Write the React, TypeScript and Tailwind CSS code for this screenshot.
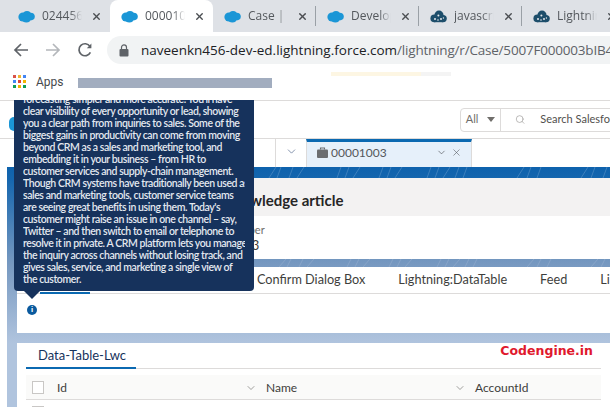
import { ChevronDown, Search, X } from "lucide-react";

type Tab = { title: string; icon: "sf" | "dark"; active?: boolean; sep?: boolean };

const tabs: Tab[] = [
  { title: "024456", icon: "sf" },
  { title: "000010", icon: "sf", active: true },
  { title: "Case | Salesforce", icon: "sf", sep: true },
  { title: "Developer", icon: "sf", sep: true },
  { title: "javascript", icon: "dark", sep: true },
  { title: "Lightning", icon: "dark" },
];

const appColors = ["#d9534a", "#f1b62f", "#4285f4", "#4285f4", "#db4437", "#f4b400", "#0f9d58", "#f4b400", "#0f9d58"];

const helpLines = [
  "clear visibility of every opportunity or lead, showing",
  "you a clear path from inquiries to sales. Some of the",
  "biggest gains in productivity can come from moving",
  "beyond CRM as a sales and marketing tool, and",
  "embedding it in your business – from HR to",
  "customer services and supply-chain management.",
  "Though CRM systems have traditionally been used as",
  "sales and marketing tools, customer service teams",
  "are seeing great benefits in using them. Today's",
  "customer might raise an issue in one channel – say,",
  "Twitter – and then switch to email or telephone to",
  "resolve it in private. A CRM platform lets you manage",
  "the inquiry across channels without losing track, and",
  "gives sales, service, and marketing a single view of",
  "the customer.",
];

function SfCloud() {
  return (
    <svg width="17" height="13" viewBox="0 0 17 13" className="shrink-0">
      <g fill="#1b96d6">
        <ellipse cx="5" cy="7" rx="4.6" ry="4.6" />
        <ellipse cx="9" cy="4.6" rx="4" ry="3.6" />
        <ellipse cx="12.6" cy="6.6" rx="4.2" ry="3.8" />
        <ellipse cx="8.4" cy="9" rx="4" ry="3.6" />
      </g>
    </svg>
  );
}

function DarkCloud() {
  return (
    <svg width="17" height="13" viewBox="0 0 17 13" className="shrink-0">
      <g fill="#1d4e6b">
        <ellipse cx="4.4" cy="8.4" rx="4" ry="3.8" />
        <ellipse cx="9" cy="5.4" rx="4.6" ry="4.8" />
        <ellipse cx="13" cy="8.6" rx="3.8" ry="3.6" />
        <rect x="4" y="8" width="9" height="4.2" />
      </g>
      <g fill="#e4e7ea">
        <circle cx="5" cy="9" r="1" />
        <circle cx="8.4" cy="5.6" r="1" />
        <circle cx="11" cy="9" r="1" />
        <circle cx="8" cy="10" r="0.8" />
        <circle cx="13.4" cy="8" r="0.7" />
      </g>
    </svg>
  );
}

function BrowserTab({ tab }: { tab: Tab }) {
  return (
    <div
      className={`relative flex h-[32px] w-[103px] shrink-0 items-center pl-[11px] ${
        tab.active ? "rounded-t-[8px] bg-white" : ""
      }`}
    >
      {tab.sep && <span className="absolute right-0 top-[6px] h-[20px] w-px bg-[#9aa0a6]" />}
      {tab.icon === "sf" ? <SfCloud /> : <DarkCloud />}
      <span className="ml-[7px] w-[40px] overflow-hidden whitespace-nowrap font-['Open_Sans',sans-serif] text-[12px] text-[#54585d] [mask-image:linear-gradient(90deg,#000_70%,transparent)]">
        {tab.title}
      </span>
      <X size={11} strokeWidth={3} className="ml-[9px] shrink-0 text-[#4a4d51]" />
    </div>
  );
}

function BandPattern({ height, color }: { height: number; color: string }) {
  const lines = [14, 26, 34, 62, 70, 78, 120, 128, 136, 180, 188, 196, 262, 270, 282, 290, 330, 338, 346, 372, 380, 388, 420, 428, 436, 448, 456, 510, 520, 530, 574, 584, 596];
  return (
    <svg width="603" height={height} className="block">
      {lines.map((x, i) => (
        <path key={x} d={`M${x} ${height}L${x + (i % 3 === 0 ? 7 : 4)} 0`} stroke={color} strokeWidth="0.7" fill="none" />
      ))}
    </svg>
  );
}

function HeaderCell({ label, width, chevron }: { label: string; width: string; chevron?: boolean }) {
  return (
    <div className={`flex items-center justify-between pr-[9px] ${width}`}>
      <span className="text-[12px] text-[#3e3e3c]">{label}</span>
      {chevron && <ChevronDown size={12} strokeWidth={1.3} className="text-[#706e6b]" />}
    </div>
  );
}

export default function App() {
  return (
    <div className="relative h-[407px] w-[610px] overflow-hidden bg-white font-['Roboto',sans-serif]">
      {/* browser chrome */}
      <div className="flex h-[32px] overflow-hidden bg-[#dee1e6] pl-[7px]">
        {tabs.map((t) => (
          <BrowserTab key={t.title} tab={t} />
        ))}
      </div>
      <div className="flex h-[36px] items-center bg-white pl-[13px]">
        <svg width="16" height="16" viewBox="0 0 16 16" fill="none" stroke="#5f6368" strokeWidth="1.7">
          <path d="M15 8H2M8 2L2 8l6 6" />
        </svg>
        <svg width="16" height="16" viewBox="0 0 16 16" fill="none" stroke="#b4b7bb" strokeWidth="1.7" className="ml-[16px]">
          <path d="M1 8h13M8 2l6 6-6 6" />
        </svg>
        <svg width="16" height="16" viewBox="0 0 16 16" fill="none" stroke="#5f6368" strokeWidth="1.7" className="ml-[16px]">
          <path d="M13.4 10.4A6 6 0 1 1 13 4.4" />
          <path d="M14.4 1.6v4.6H9.8z" fill="#5f6368" stroke="none" />
        </svg>
        <div className="ml-[14px] flex h-[28px] flex-1 items-center overflow-hidden rounded-l-[14px] bg-[#f1f3f4] pl-[12px]">
          <svg width="10" height="13" viewBox="0 0 10 13" className="shrink-0">
            <rect x="0.5" y="5" width="9" height="7.5" rx="1" fill="#5f6368" />
            <path d="M2.5 5V3.4a2.5 2.5 0 0 1 5 0V5" fill="none" stroke="#5f6368" strokeWidth="1.2" />
          </svg>
          <span className="ml-[12px] whitespace-nowrap font-['Open_Sans',sans-serif] text-[13.5px] text-[#202124]">
            naveenkn456-dev-ed.lightning.force.com
            <span className="tracking-[-0.2px] text-[#5f6368]">/lightning/r/Case/5007F000003bIB4</span>
          </span>
        </div>
      </div>
      <div className="flex h-[26px] items-center bg-white pl-[13px]">
        <div className="grid grid-cols-3 gap-[2px]">
          {appColors.map((c, i) => (
            <span key={i} className="h-[3px] w-[3px]" style={{ backgroundColor: c }} />
          ))}
        </div>
        <span className="ml-[10px] mt-[1px] text-[12px] text-[#45484c]">Apps</span>
        <div className="ml-[14px] mt-[3px] h-[10px] w-[194px] bg-[#a2adbf]" />
        <div className="ml-[59px] mb-[14px] h-[4px] w-[90px] bg-[#fdf6e3]" />
        <div className="h-[4px] w-[30px] mb-[14px] bg-[#f4f4f4]" />
      </div>

      {/* salesforce header */}
      <div className="mt-[6px] border-t border-[#dddbda]">
        <div className="flex h-[38px] items-center justify-end border-b border-[#dddbda] font-['Lato',sans-serif]">
          <div className="flex h-[24px] w-[151px] -mr-px items-center rounded-l-[4px] border border-[#dddbda] text-[11px] text-[#706e6b]">
            <div className="flex h-full w-[43px] items-center justify-center gap-[9px] border-r border-[#dddbda]">
              All
              <span className="h-0 w-0 border-x-[4px] border-t-[5px] border-x-transparent border-t-[#706e6b]" />
            </div>
            <Search size={11} strokeWidth={1.3} className="ml-[14px] text-[#8a8886]" />
            <span className="ml-[15px] whitespace-nowrap text-[#514f4d]">Search Salesfo</span>
          </div>
        </div>
        <div className="flex h-[28px] pl-[275px] font-['Lato',sans-serif]">
          <div className="flex w-[31px] items-center justify-center border-l border-[#dddbda] pb-[4px]">
            <ChevronDown size={13} strokeWidth={1.3} className="text-[#54698d]" />
          </div>
          <div className="flex w-[166px] items-center border-x border-t-[3px] border-x-[#dddbda] border-t-[#0b69b1] bg-[#e6f0fa] pb-[4px] pl-[10px] pr-[9px]">
            <svg width="11" height="11" viewBox="0 0 11 11" className="shrink-0">
              <rect x="0" y="2.4" width="11" height="8.6" rx="1" fill="#6b6d70" />
              <path d="M3.5 2.4V1h4v1.4" fill="none" stroke="#6b6d70" strokeWidth="1.1" />
            </svg>
            <span className="ml-[3px] text-[12px] text-[#54575b]">00001003</span>
            <ChevronDown size={11} strokeWidth={1.4} className="ml-auto text-[#4b4f54]" />
            <X size={11} strokeWidth={1.2} className="ml-[4px] text-[#4b4f54]" />
          </div>
        </div>
      </div>

      {/* page */}
      <div className="ml-[7px] h-[240px] bg-[linear-gradient(180deg,#0e62ad_0px,#1566ae_12px,#7698c0_96px,#b0c4de_176px)]">
        <BandPattern height={11} color="#4f8cc4" />
        <div className="ml-[10px] font-['Lato',sans-serif]">
          <div className="flex h-[38px] items-end bg-[#f3f2f2] pb-[5px] pl-[160px] text-[15px] font-bold text-[#262626]">
            Create knowledge article
          </div>
          <div className="h-[43px] bg-white pl-[182px] pt-[7px]">
            <p className="text-[11px] leading-[14px] text-[#706e6b]">Case Number</p>
            <p className="text-[13px] leading-[16px] text-[#3e3e3c]">00001003</p>
          </div>
          <BandPattern height={8} color="#90abcc" />
          <div className="h-[66px] bg-white">
            <div className="flex h-[27px] items-center gap-[33px] border-b border-[#dddbda] pl-[240px] text-[12.7px] whitespace-nowrap text-[#3e3e3c]">
              <span>Confirm Dialog Box</span>
              <span>Lightning:DataTable</span>
              <span>Feed</span>
              <span>Links</span>
            </div>
          </div>
          <div className="mt-[10px] h-[64px] overflow-hidden bg-white px-[9px]">
            <div className="flex h-[26px] items-end justify-between border-b border-[#dddbda] pr-[8px]">
              <div className="-mb-px flex h-[26px] w-[110px] items-end border-b-2 border-[#0b69b1] pb-[2px] pl-[12px] text-[13px] text-[#16325c]">
                Data-Table-Lwc
              </div>
              <span className="mb-[7px] font-['DejaVu_Sans',sans-serif] text-[12.5px] font-bold text-[#e0182d]">Codengine.in</span>
            </div>
            <div className="mt-[6px] flex h-[25px] items-center border-b border-[#dddbda] bg-[#fafaf9] pl-[6px]">
              <span className="h-[13px] w-[12px] border border-[#c9c7c5] bg-white" />
              <div className="ml-[13px] flex pt-[1px]">
                <HeaderCell label="Id" width="w-[209px]" chevron />
                <HeaderCell label="Name" width="w-[209px]" chevron />
                <HeaderCell label="AccountId" width="w-[100px]" />
              </div>
            </div>
            <div className="pl-[6px] pt-[6px]">
              <span className="block h-[13px] w-[12px] border border-[#c9c7c5] bg-white" />
            </div>
          </div>
        </div>
      </div>

      {/* logo peeking out from under the help text */}
      <div className="absolute left-[9px] top-[117px] h-[14px] w-[10px] rounded-full bg-[#1b96d6]" />

      {/* help text popover */}
      <div className="absolute left-[14px] top-[100px] h-[191px] w-[240px] rounded-b-[4px] bg-[#16325c] px-[9px]">
        <div className="h-full overflow-hidden">
          <p className="-mt-[7px] whitespace-nowrap font-['Lato',sans-serif] text-[10.5px] font-semibold leading-[12px] tracking-[-0.42px] text-[#e4e9f0]">
            <span className="block">forecasting simpler and more accurate. You'll have</span>
            {helpLines.map((line) => (
              <span key={line} className="block">
                {line}
              </span>
            ))}
          </p>
        </div>
        <span className="absolute left-[10px] top-full h-0 w-0 border-x-[8px] border-t-[8px] border-x-transparent border-t-[#16325c]" />
      </div>

      {/* active record tab underline, next to the arrow */}
      <div className="absolute left-[40px] top-[292px] h-[2px] w-[50px] bg-[#0b69b1]" />
      <div className="absolute left-[27px] top-[305px] flex h-[10px] w-[10px] items-center justify-center rounded-full bg-[#0b5a9e]">
        <span className="text-[8px] font-bold leading-none text-white">i</span>
      </div>
    </div>
  );
}
